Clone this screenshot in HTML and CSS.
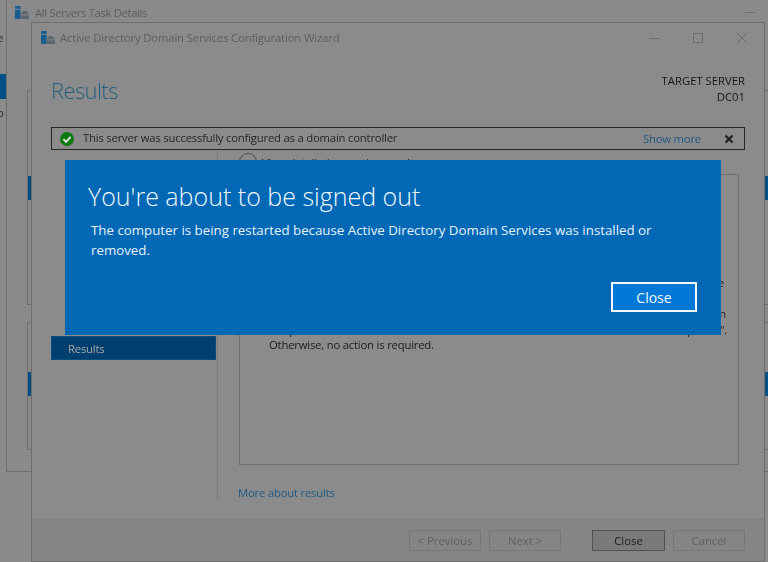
FILE: index.html
```html
<!DOCTYPE html>
<html lang="en">
<head>
<meta charset="utf-8">
<title>Active Directory Domain Services Configuration Wizard</title>
<link rel="stylesheet" href="styles.css">
</head>
<body>
<div class="desktop">
  <div class="far-left">
    <span class="far-char far-char-top">e</span>
    <span class="far-tab"></span>
    <span class="far-char">o</span>
  </div>

  <div class="back-window">
    <div class="back-title">
      <svg class="app-icon" viewBox="0 0 15 15"><rect x="0" y="0" width="6" height="14" fill="#1a5d8f"/><rect x="0" y="3" width="6" height="1" fill="#8a8a8a"/><path d="M6 9l3-4h3l3 4v5H6z" fill="#5c6770"/><rect x="6" y="9" width="9" height="1" fill="#8a8a8a"/></svg>
      <span class="back-name">All Servers Task Details</span>
      <span class="back-min"></span>
    </div>
    <div class="back-panel back-panel-a"><span class="back-tab"></span></div>
    <div class="back-panel back-panel-b"><span class="back-tab back-tab-b"></span></div>
    <div class="back-right back-right-a"><span class="back-tab"></span></div>
    <div class="back-right back-right-b"><span class="back-tab back-tab-b"></span></div>
  </div>

  <section class="wizard">
    <header class="titlebar">
      <svg class="app-icon" viewBox="0 0 15 15"><rect x="0" y="0" width="6" height="14" fill="#1a5d8f"/><rect x="0" y="3" width="6" height="1" fill="#8a8a8a"/><path d="M6 9l3-4h3l3 4v5H6z" fill="#5c6770"/><rect x="6" y="9" width="9" height="1" fill="#8a8a8a"/></svg>
      <span class="titlebar-name">Active Directory Domain Services Configuration Wizard</span>
      <div class="win-controls">
        <svg viewBox="0 0 12 12"><path d="M1 6.5h10" stroke="#6d6d6d" fill="none"/></svg>
        <svg viewBox="0 0 12 12"><rect x="1.5" y="1.5" width="9" height="9" stroke="#6d6d6d" fill="none"/></svg>
        <svg viewBox="0 0 12 12"><path d="M1 1l10 10M11 1L1 11" stroke="#6d6d6d" fill="none"/></svg>
      </div>
    </header>

    <div class="page-head">
      <h1>Results</h1>
      <div class="target">TARGET SERVER<br>DC01</div>
    </div>

    <div class="notice">
      <svg class="ok-icon" viewBox="0 0 14 14"><circle cx="7" cy="7" r="7" fill="#0c7a12"/><path d="M3.4 7.2l2.6 2.6 4.6-5" stroke="#e4e4e4" stroke-width="1.9" fill="none"/></svg>
      <span class="notice-text">This server was successfully configured as a domain controller</span>
      <a class="link notice-more">Show more</a>
      <svg class="notice-x" viewBox="0 0 10 10"><path d="M1.5 1.5l7 7M8.5 1.5l-7 7" stroke="#1f1f1f" stroke-width="2.2" fill="none"/></svg>
    </div>

    <div class="main">
      <nav class="nav">
        <div class="nav-item">Deployment Configuration</div>
        <div class="nav-item">Domain Controller Options</div>
        <div class="nav-item">DNS Options</div>
        <div class="nav-item">Additional Options</div>
        <div class="nav-item">Paths</div>
        <div class="nav-item">Review Options</div>
        <div class="nav-item">Prerequisites Check</div>
        <div class="nav-item">Installation</div>
        <div class="nav-item nav-item-active">Results</div>
      </nav>
      <div class="content">
        <div class="view-line">
          <span class="circle"></span>
          <span>View detailed operation results</span>
        </div>
        <div class="result-box">
          <p class="line line-fit line-fit-a">A delegation for this DNS server cannot be created because the authoritative parent zone</p>
          <p class="line">cannot be found or it does not run Windows DNS server. If you are integrating with an</p>
          <p class="line line-fit line-fit-b">existing DNS infrastructure, you should manually create a delegation to this DNS server in</p>
          <p class="line line-fit line-fit-c">the parent zone to ensure reliable name resolution from outside the domain "corp.local".</p>
          <p class="line">Otherwise, no action is required.</p>
        </div>
        <a class="link more">More about results</a>
      </div>
    </div>

    <footer class="footer">
      <button class="btn btn-off">&lt; Previous</button>
      <button class="btn btn-off">Next &gt;</button>
      <button class="btn btn-default">Close</button>
      <button class="btn btn-off">Cancel</button>
    </footer>
  </section>

  <div class="modal">
    <h2>You're about to be signed out</h2>
    <p>The computer is being restarted because Active Directory Domain Services was installed or removed.</p>
    <div class="modal-actions"><button class="modal-close">Close</button></div>
  </div>
</div>
</body>
</html>
```

FILE: styles.css
```css
* { box-sizing: border-box; }
html, body { margin: 0; padding: 0; height: 100%; }
body { background: #8a8a8a; font-family: "Open Sans", "Liberation Sans", sans-serif; font-size: 11.3px; letter-spacing: -0.2px; color: #1c1c1c; overflow: hidden; }
.desktop { position: relative; width: 768px; height: 562px; overflow: hidden; filter: blur(0.3px); }

.far-left { position: absolute; left: 0; top: 0; width: 6px; height: 130px; display: flex; flex-direction: column; color: #2e2e2e; }
.far-char { position: absolute; left: -3px; top: 106px; line-height: 14px; }
.far-char-top { top: 31px; }
.far-tab { position: absolute; left: 0; top: 74px; width: 6px; height: 25px; background: #004f85; }

.back-window { position: absolute; left: 6px; top: 0; width: 790px; height: 472px; border-left: 1px solid #6e6e6e; border-bottom: 1px solid #6e6e6e; background: #8a8a8a; }
.back-title { display: flex; align-items: center; height: 25px; padding-left: 8px; color: #5d5d5d; }
.back-name { margin-left: 6px; letter-spacing: -0.35px; }
.back-min { position: absolute; left: 738px; top: 12px; width: 10px; height: 1px; background: #6d6d6d; }
.app-icon { width: 14px; height: 14px; flex: none; }
.back-panel { position: absolute; left: 20px; width: 10px; border: 1px solid #6e6e6e; border-right: 0; }
.back-panel-a { top: 90px; height: 215px; }
.back-panel-b { top: 322px; height: 128px; }
.back-tab { position: absolute; left: 0; top: 85px; width: 100%; height: 24px; background: #004f85; }
.back-tab-b { top: 49px; }
.back-right { position: absolute; left: 757px; width: 10px; border-top: 1px solid #6e6e6e; border-bottom: 1px solid #6e6e6e; }
.back-right-a { top: 90px; height: 215px; }
.back-right-b { top: 322px; height: 128px; }

.wizard { position: absolute; left: 31px; top: 22px; width: 734px; height: 540px; border: 1px solid #6e6e6e; background: #8b8b8b; display: flex; flex-direction: column; }
.titlebar { display: flex; align-items: center; height: 29px; padding-left: 9px; flex: none; color: #5d5d5d; }
.titlebar-name { margin-left: 5px; letter-spacing: -0.15px; }
.win-controls { margin-left: auto; display: flex; gap: 32px; padding-right: 16px; }
.win-controls svg { width: 12px; height: 12px; }

.page-head { display: flex; justify-content: space-between; height: 75px; padding: 20px 19px 0 19px; flex: none; }
.page-head h1 { margin: 0; font-size: 22px; font-weight: 300; line-height: 36px; letter-spacing: -0.6px; color: #23607f; }
.target { line-height: 15.5px; letter-spacing: 0; text-align: right; color: #161616; padding-top: 1px; }

.notice { display: flex; align-items: center; height: 23px; margin: 0 19px; padding: 0 9px 0 8px; border: 1px solid #262626; flex: none; }
.ok-icon { width: 14px; height: 14px; flex: none; }
.notice-text { margin-left: 9px; padding-bottom: 2px; color: #262626; }
.notice-more { margin-left: auto; }
.notice-x { width: 10px; height: 10px; margin: 1px 1px 0 23px; flex: none; }
.link { color: #1f5a85; }

.main { display: flex; flex: 1; min-height: 0; }
.nav { width: 165px; margin-left: 19px; height: 350px; padding-top: 4px; flex: none; color: #5c5c5c; }
.nav-item { height: 22.75px; line-height: 22.75px; padding-left: 17px; white-space: nowrap; }
.nav-item-active { height: 24px; line-height: 24px; background: #003f6e; color: #a8a8a8; border: 1px solid #0b4f80; padding-left: 16px; }
.content { margin-left: 1px; width: 527px; height: 350px; border-left: 1px solid #7a7a7a; padding-left: 21px; display: flex; flex-direction: column; }
.view-line { display: flex; align-items: center; gap: 5px; height: 24px; flex: none; color: #1c1c1c; white-space: nowrap; }
.circle { width: 18px; height: 18px; border-radius: 50%; border: 1px solid #4a4a4a; flex: none; }
.result-box { width: 500px; height: 291px; flex: none; border: 1px solid #6e6e6e; padding: 100px 0 0 29px; }
.line { margin: 0; line-height: 15.5px; white-space: nowrap; }
.line-fit { white-space: normal; text-align-last: justify; }
.line-fit-a { width: 455px; }
.line-fit-b { width: 457px; }
.line-fit-c { width: 458px; }
.more { margin: 20px 0 0 -1px; line-height: 15px; flex: none; }

.footer { display: flex; height: 42px; margin-top: auto; padding: 10px 19px 0 0; gap: 8px; justify-content: flex-end; align-items: flex-start; background: #858585; border-top: 1px solid #7f7f7f; flex: none; }
.btn { width: 72px; height: 21px; padding: 0; font: inherit; background: transparent; border: 1px solid #777; color: #5f5f5f; }
.btn-default { width: 73px; margin-left: 23px; background: #7a7a7a; border-color: #525252; color: #1c1c1c; }

.modal { position: absolute; left: 65px; top: 160px; width: 656px; height: 175px; background: #0068b4; color: #e8f1f8; display: flex; flex-direction: column; padding: 19px 24px 23px 23px; letter-spacing: 0; }
.modal h2 { margin: 0; font-size: 25px; font-weight: 300; line-height: 34px; color: #f4f8fb; white-space: nowrap; }
.modal p { margin: 7px 0 0 3px; font-size: 13.3px; line-height: 20px; }
.modal-actions { margin-top: auto; display: flex; justify-content: flex-end; }
.modal-close { width: 86px; height: 30px; background: #0078d7; border: 2px solid #f4f8fb; color: #f4f8fb; font: 500 14px "Open Sans", "Liberation Sans", sans-serif; padding: 0; }
```
